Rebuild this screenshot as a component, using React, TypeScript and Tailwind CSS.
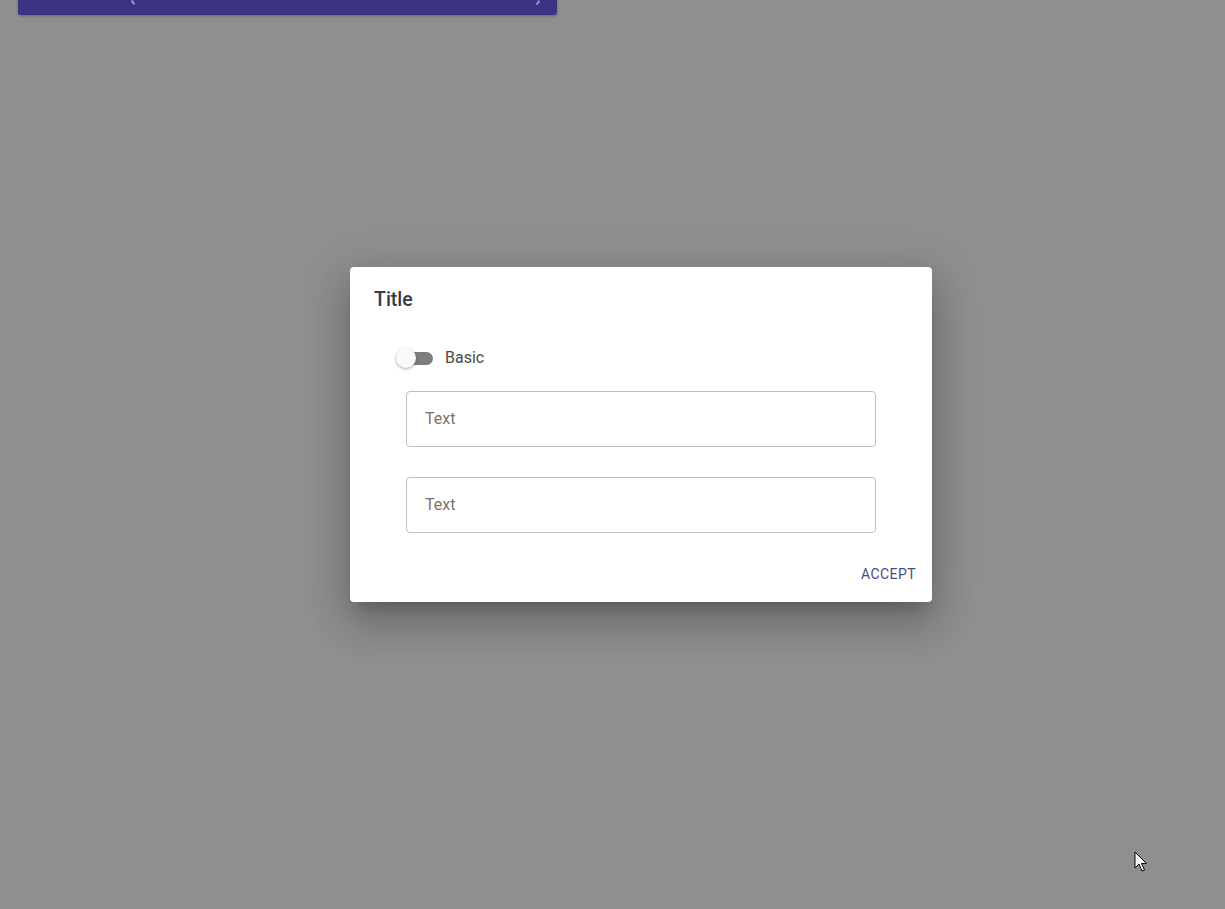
import React from "react";

function Cursor() {
  return (
    <svg className="absolute left-[1134px] top-[851px]" width="14" height="22" viewBox="0 0 14 22">
      <path d="M1 1 L1 17 L5 13 L8 20 L10.5 19 L7.5 12.5 L12.5 12.5 Z" fill="#fff" stroke="#000" strokeWidth="1" strokeLinejoin="round" />
    </svg>
  );
}

export default function App() {
  return (
    <div className="relative h-[909px] w-[1225px] overflow-hidden bg-[#8f8f8e]" style={{ fontFamily: "Roboto, 'Liberation Sans', sans-serif" }}>
      {/* app bar behind the scrim */}
      <div className="ml-[18px] flex h-[15px] w-[539px] items-end justify-between rounded-b-[3px] bg-[#3d3384] pl-[114px] pr-[19px] shadow-[0_1px_3px_rgba(0,0,0,0.3)]">
        <span className="mb-[10px] h-[5px] w-[1.5px] -rotate-[35deg] bg-[#9a95c0]" />
        <span className="mb-[10px] h-[5px] w-[1.5px] rotate-[35deg] bg-[#9a95c0]" />
      </div>

      <div className="flex justify-center pt-[252px] pl-[57px]">
        <div className="w-[582px] rounded-[4px] bg-white shadow-[0_11px_15px_-7px_rgba(0,0,0,0.2),0_24px_38px_3px_rgba(0,0,0,0.14),0_9px_46px_8px_rgba(0,0,0,0.12)]">
          <h2 className="px-6 pt-[20px] text-[19.5px] font-medium leading-[26px] text-[#3b3a48]">Title</h2>

          <div className="px-[46px] pt-[33px]">
            <label className="flex items-center gap-3">
              <span className="relative inline-flex h-[20px] w-[37px] items-center">
                <span className="ml-[1px] h-[13px] w-[36px] rounded-full bg-[#7d7d7d]" />
                <span className="absolute left-0 top-0 h-[20px] w-[20px] rounded-full bg-[#fafafa] shadow-[0_1px_3px_rgba(0,0,0,0.35)]" />
              </span>
              <span className="text-[16px] text-[#4a4a4a]">Basic</span>
            </label>

            <div className="flex flex-col gap-[30px] pl-[10px] pr-[10px] pt-[21px]">
              <div className="flex h-[56px] w-[470px] items-center rounded-[4px] border border-[#bdbdbd] px-[18px]">
                <span className="text-[16px] text-[#7b7272]">Text</span>
              </div>
              <div className="flex h-[56px] w-[470px] items-center rounded-[4px] border border-[#bdbdbd] px-[18px]">
                <span className="text-[16px] text-[#7b7272]">Text</span>
              </div>
            </div>
          </div>

          <div className="flex justify-end pl-[17px] pr-[16px] pb-[18px] pt-[31px]">
            <button className="text-[14px] font-normal uppercase leading-[20px] tracking-[0.03em] text-[#4b4a8a]">Accept</button>
          </div>
        </div>
      </div>

      <Cursor />
    </div>
  );
}
